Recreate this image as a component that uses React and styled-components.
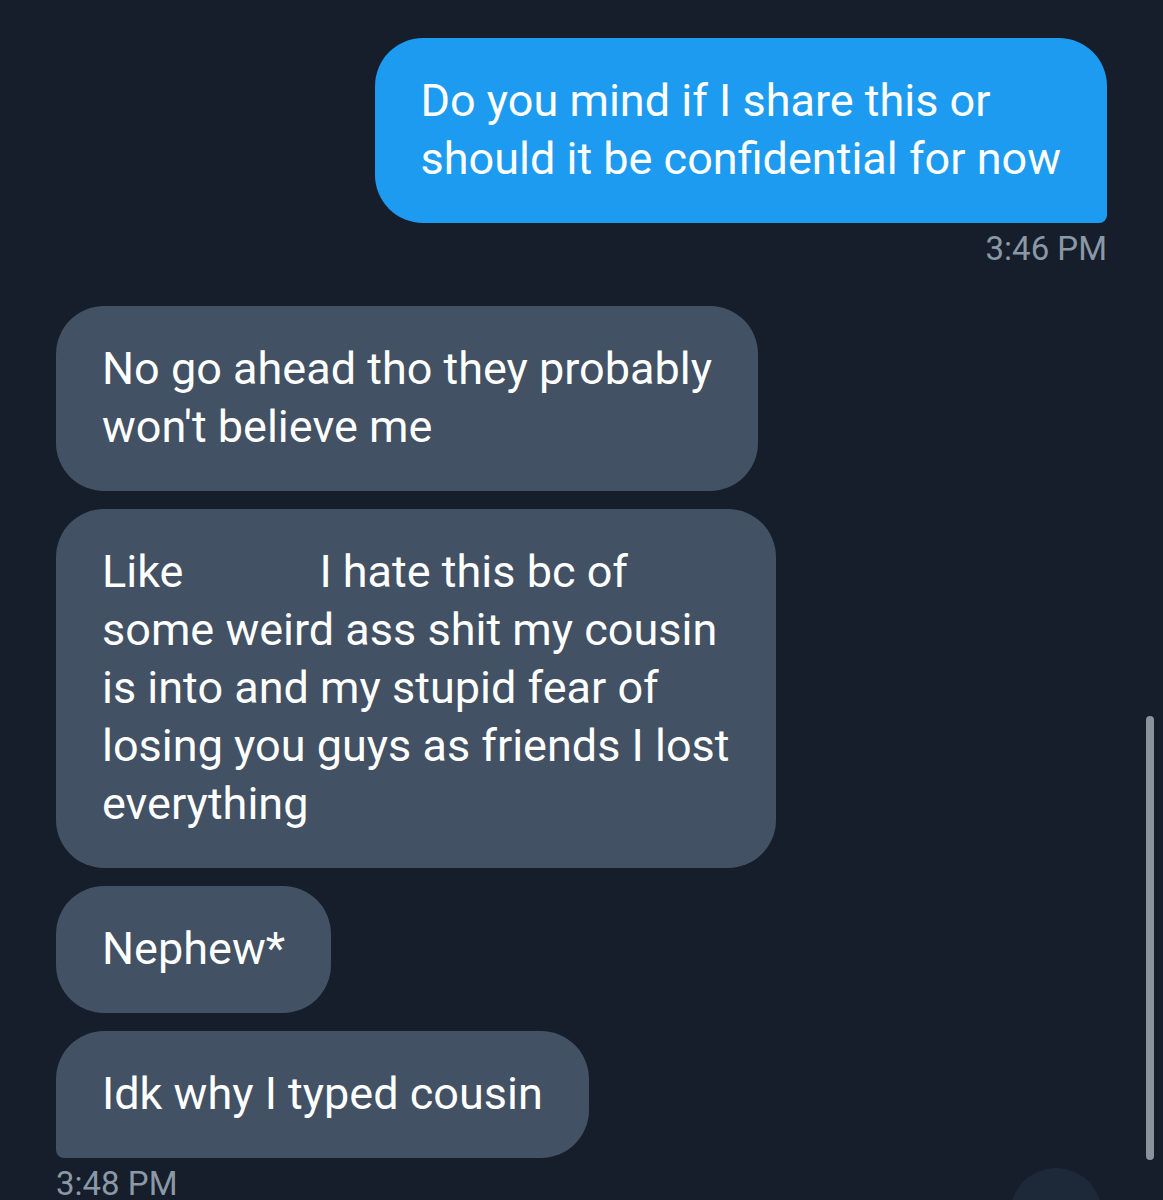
import React from 'react';
import styled, { createGlobalStyle } from 'styled-components';

const GlobalStyle = createGlobalStyle`
  html, body {
    margin: 0;
    padding: 0;
    background: #151e2a;
  }
  body {
    font-family: Roboto, "Liberation Sans", sans-serif;
    -webkit-font-smoothing: antialiased;
  }
`;

const Screen = styled.div`
  position: relative;
  width: 1163px;
  height: 1200px;
  overflow: hidden;
  background: #151e2a;
`;

const Thread = styled.div`
  display: flex;
  flex-direction: column;
  padding: 38px 56px 0 56px;
`;

const Group = styled.div`
  display: flex;
  flex-direction: column;
  align-items: ${(p) => (p.mine ? 'flex-end' : 'flex-start')};
  margin-top: ${(p) => p.top || 0}px;
`;

const Stack = styled.div`
  display: flex;
  flex-direction: column;
  align-items: inherit;
  gap: 18px;
`;

const Bubble = styled.div`
  box-sizing: border-box;
  padding: 34px 46px 35px;
  font-size: 45px;
  line-height: 58px;
  color: #ffffff;
  white-space: pre-line;
  background: ${(p) => (p.mine ? '#1d9bf0' : '#425164')};
  border-radius: 48px;
  ${(p) => p.tail && p.mine && 'border-bottom-right-radius: 8px;'}
  ${(p) => p.tail && !p.mine && 'border-bottom-left-radius: 8px;'}
`;

const Blank = styled.span`
  display: inline-block;
  width: 136px;
`;

const Time = styled.div`
  font-size: 33px;
  line-height: 34px;
  color: #8b98a5;
  margin-top: 9px;
`;

const Scrollbar = styled.div`
  position: absolute;
  right: 9px;
  top: 716px;
  width: 8px;
  height: 444px;
  border-radius: 4px;
  background: #8a929c;
`;

const ScrollButton = styled.div`
  position: absolute;
  left: 1010px;
  top: 1168px;
  width: 92px;
  height: 92px;
  border-radius: 50%;
  background: #1d2838;
`;

export default function App() {
  return (
    <Screen>
      <GlobalStyle />
      <Thread>
        <Group mine>
          <Stack>
            <Bubble mine tail>
              {'Do you mind if I share this or\nshould it be confidential for now'}
            </Bubble>
          </Stack>
          <Time>3:46 PM</Time>
        </Group>
        <Group top={40}>
          <Stack>
            <Bubble>{"No go ahead tho they probably\nwon't believe me"}</Bubble>
            <Bubble>
              Like<Blank />I hate this bc of{'\n'}some weird ass shit my cousin{'\n'}is into and my stupid fear of{'\n'}losing you guys as friends I lost{'\n'}everything
            </Bubble>
            <Bubble>Nephew*</Bubble>
            <Bubble tail>Idk why I typed cousin</Bubble>
          </Stack>
          <Time>3:48 PM</Time>
        </Group>
      </Thread>
      <Scrollbar />
      <ScrollButton />
    </Screen>
  );
}
